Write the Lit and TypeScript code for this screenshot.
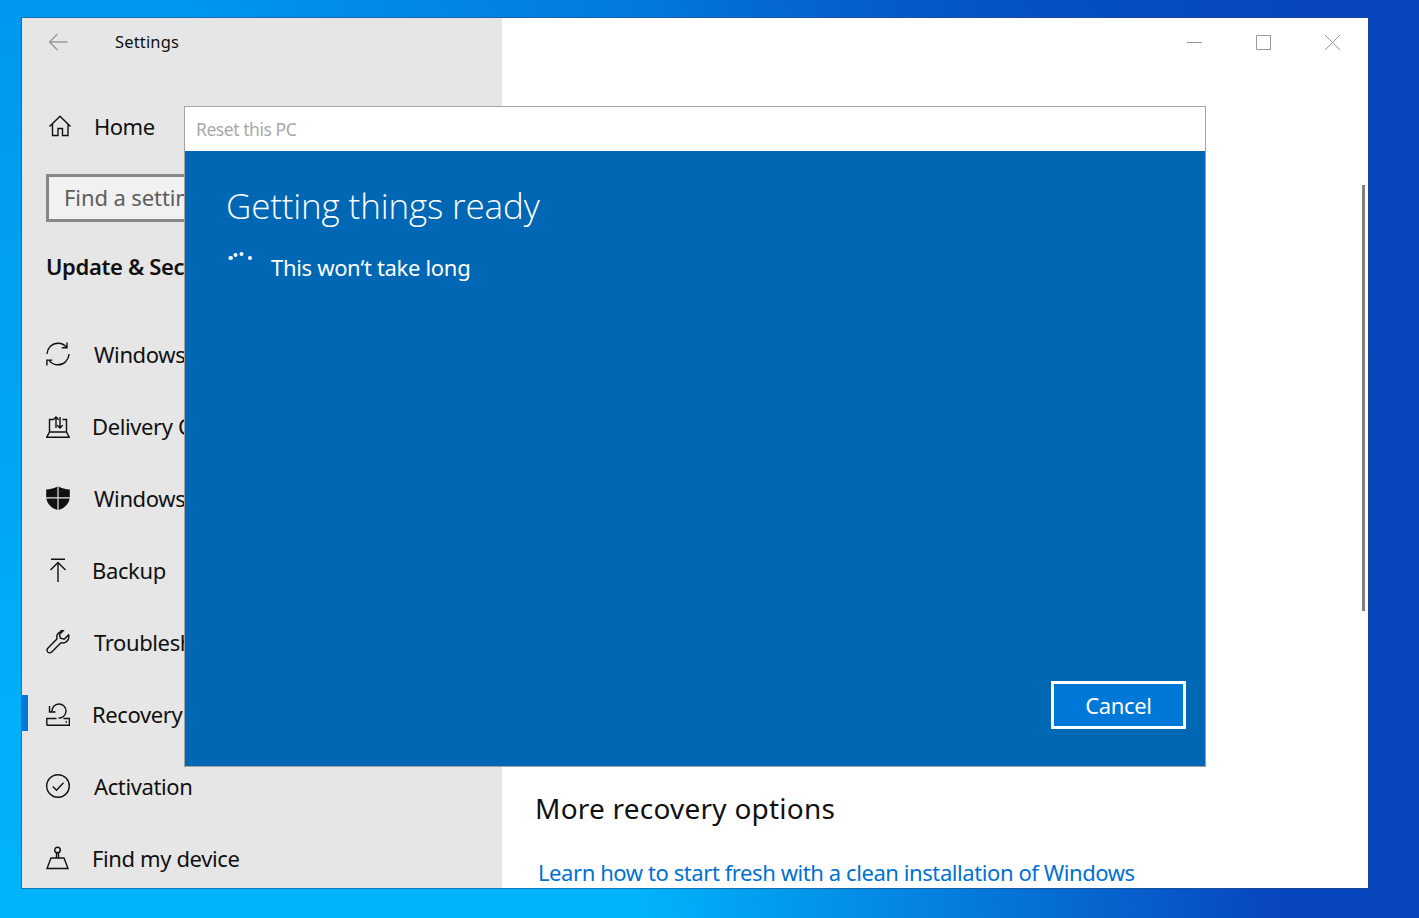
import { LitElement, html, css, svg } from "lit";
import { customElement } from "lit/decorators.js";

const ic = (body: unknown) => html`<svg class="ic" viewBox="0 0 24 24" fill="none" stroke="#111" stroke-width="1.4">${body}</svg>`;

const icons = {
  home: svg`<path d="M1.5 12.5 12 2.2l10.5 10.3M4.5 10v11.5h5.5v-7h4.5v7H20V10"/>`,
  sync: svg`<path d="M.9 12C1.400 6 6 1.200 12 1.200c3.600 0 6.600 1.500 8.700 4.200M23.100 12c-.5 6-5.100 10.800-11.100 10.800-3.600 0-6.600-1.500-8.700-4.200M21 .5v5.200h-5.200M.9 23.500v-5.400h5.400"/>`,
  delivery: svg`<path d="M3.500 18V5.500h4M16.500 5.500h4V18M.7 23.300 3.500 18h17l2.800 5.300zM10 14V3M7.300 5.700 10 3l2.700 2.700M14 3v11M11.300 11.300 14 14l2.700-2.700"/>`,
  shield: svg`<path fill="#111" stroke="none" d="M11.400 .5v10.800H.2V3.500c4.400-.2 8.200-1.200 11.200-3zM12.600 .5c3 1.800 6.800 2.800 11.200 3v7.800H12.600zM.4 12.500h11v11.500C5.400 22 1.100 18 .4 12.500zM12.600 12.500h11c-.7 5.500-5 9.500-11 11.500z"/>`,
  backup: svg`<path d="M5 1.200h14M12 24V4.500M4.500 12 12 4.500l7.500 7.500"/>`,
  wrench: svg`<path d="M15 1.600c-3 .6-5 3.800-3.900 7.200L1.800 18.200c-1.700 1.800-.3 4.700 1.800 4.700.8 0 1.500-.3 2.100-.9l9.300-9.300c4.200 1.200 8-2 7.900-6.100 0-.6-.1-1.100-.3-1.700l-4.400 4.400-3.800-1-1-3.800 3.900-3.900c-.7-.2-1.500-.1-2.200 0z"/>`,
  recovery: svg`<path d="M.8 23.300h22.600v-6.800H17.500M.8 23.300v-6.800h9.700M19.500 20h1.500M6 9.500A7 7 0 1 1 12.500 16M3.500 4v6h6"/>`,
  check: svg`<circle cx="12" cy="12" r="11.300"/><path d="m6.800 12.500 3.700 3.700 7-7.500"/>`,
  find: svg`<circle cx="11.500" cy="4" r="2.800"/><path d="M10.500 7v5M12.500 7v5M5 12h13l4 10.500H1z"/>`,
};

const navItems: [unknown, string, number, boolean][] = [
  [icons.sync, "Windows Update", 24, false],
  [icons.delivery, "Delivery Optimization", 22, false],
  [icons.shield, "Windows Security", 24, false],
  [icons.backup, "Backup", 22, false],
  [icons.wrench, "Troubleshoot", 24, false],
  [icons.recovery, "Recovery", 22, true],
  [icons.check, "Activation", 24, false],
  [icons.find, "Find my device", 22, false],
];

@customElement("app-root")
export class AppRoot extends LitElement {
  static styles = css`
    :host {
      display: block;
      width: 1419px;
      height: 918px;
      overflow: hidden;
      font-family: "Noto Sans", "Open Sans", sans-serif;
      color: #111;
    }
    .desktop {
      position: relative;
      width: 100%;
      height: 100%;
      padding: 18px 51px 30px 22px;
      box-sizing: border-box;
      background:
        radial-gradient(ellipse 900px 420px at 75% 0, rgba(5, 70, 190, 0.7), rgba(5, 70, 190, 0)),
        linear-gradient(90deg, rgba(0, 170, 255, 0) 45%, rgba(8, 70, 190, 1) 90%),
        linear-gradient(180deg, #0098f0 0%, #00b4fb 100%);
    }
    .window {
      display: grid;
      grid-template-columns: 480px 1fr;
      height: 870px;
      overflow: hidden;
      background: #fff;
      box-shadow: 0 0 0 1px rgba(40, 70, 120, 0.55);
    }
    .side {
      background: #e6e6e6;
      overflow: hidden;
    }
    .titlebar {
      display: flex;
      align-items: center;
      height: 50px;
      padding-left: 26px;
    }
    .back {
      width: 20px;
      height: 20px;
      stroke: #999;
      fill: none;
      stroke-width: 1.4;
      margin-top: -2px;
    }
    .app-name {
      margin-left: 47px;
      font-size: 16.5px;
      margin-top: -3px;
      letter-spacing: 0.15px;
    }
    .home {
      display: flex;
      align-items: center;
      height: 40px;
      margin-top: 38px;
      padding-left: 26px;
      font-size: 22px;
      letter-spacing: -0.5px;
    }
    .home .ic { margin-right: 22px; }
    .ic {
      width: 24px;
      height: 24px;
      flex: none;
    }
    .search {
      width: 100%;
      max-width: 300px;
      height: 48px;
      box-sizing: border-box;
      margin: 28px 0 0 24px;
      padding: 0 0 2px 15px;
      border: 3px solid #878787;
      background: #f1f1f1;
      color: #5d5d5d;
      display: flex;
      align-items: center;
      font-size: 22px;
      letter-spacing: -0.1px;
      white-space: nowrap;
    }
    .section {
      margin: 24px 0 0 24px;
      height: 40px;
      line-height: 40px;
      font-size: 22px;
      font-weight: 600;
      letter-spacing: -0.35px;
      white-space: nowrap;
    }
    nav { margin-top: 32px; }
    .item {
      position: relative;
      display: flex;
      align-items: center;
      height: 72px;
      padding-left: 24px;
      font-size: 22px;
      letter-spacing: -0.38px;
      white-space: nowrap;
    }
    .item.on::before {
      content: "";
      position: absolute;
      left: 0;
      top: 17px;
      width: 6px;
      height: 36px;
      background: #0078d7;
    }
    .main {
      position: relative;
      display: flex;
      flex-direction: column;
      padding-left: 33px;
    }
    .controls {
      position: absolute;
      top: 17px;
      right: 28px;
      display: flex;
      gap: 54px;
      align-items: center;
    }
    .controls svg {
      width: 15px;
      height: 15px;
      stroke: #999;
      fill: none;
      stroke-width: 1;
    }
    .scroll {
      position: absolute;
      right: 3px;
      top: 167px;
      width: 3px;
      height: 426px;
      background: #808080;
    }
    h2 {
      margin: 769px 0 0;
      font-size: 28px;
      font-weight: 400;
      line-height: 42px;
      color: #111;
      letter-spacing: 0.23px;
      white-space: nowrap;
    }
    .link {
      margin: 27px 0 0 3px;
      font-size: 22px;
      line-height: 32px;
      color: #0071d3;
      letter-spacing: -0.42px;
      white-space: nowrap;
    }
    .dialog {
      position: absolute;
      left: 184px;
      top: 106px;
      width: 1022px;
      height: 661px;
      box-sizing: border-box;
      border: 1px solid #a3a3a3;
      display: flex;
      flex-direction: column;
      background: #0067b4;
      color: #fff;
    }
    .dlg-title {
      height: 44px;
      flex: none;
      background: #fff;
      color: #a8a8a8;
      font-size: 17.5px;
      line-height: 44px;
      padding-left: 11px;
      letter-spacing: -0.45px;
    }
    .dlg-body {
      flex: 1;
      display: flex;
      flex-direction: column;
      padding: 31px 19px 37px 41px;
    }
    h1 {
      margin: 0;
      font-size: 35px;
      line-height: 48px;
      font-weight: 300;
      font-family: "Open Sans", "Noto Sans", sans-serif;
      letter-spacing: -0.15px;
    }
    .wait {
      display: flex;
      align-items: flex-start;
      margin-top: 19px;
      font-size: 22px;
      line-height: 36px;
      letter-spacing: -0.32px;
      font-weight: 400;
    }
    .spinner {
      width: 28px;
      height: 12px;
      margin: 2px 16px 0 1px;
      flex: none;
      fill: #fff;
    }
    .footer {
      margin-top: auto;
      display: flex;
      justify-content: flex-end;
    }
    button {
      width: 135px;
      height: 48px;
      box-sizing: border-box;
      border: 3px solid #fff;
      background: #0078d7;
      color: #fff;
      font: inherit;
      font-size: 22px;
      letter-spacing: -0.35px;
      padding: 0;
    }
  `;

  render() {
    return html`
      <div class="desktop">
        <div class="window">
          <aside class="side">
            <div class="titlebar">
              <svg class="back" viewBox="0 0 20 20"><path d="M19.500 10H1.500M9.500 2 1.500 10l8 8"/></svg>
              <span class="app-name">Settings</span>
            </div>
            <div class="home">${ic(icons.home)}<span>Home</span></div>
            <div class="search">Find a setting</div>
            <div class="section">Update &amp; Security</div>
            <nav>
              ${navItems.map(
                ([i, t, x, on]) => html`<div class="item ${on ? "on" : ""}">
                  ${ic(i)}<span style="margin-left:${x}px">${t}</span>
                </div>`
              )}
            </nav>
          </aside>
          <section class="main">
            <div class="controls">
              <svg viewBox="0 0 15 15"><path d="M0 7.500h15"/></svg>
              <svg viewBox="0 0 15 15"><path d="M.5.500h14v14H.500z"/></svg>
              <svg viewBox="0 0 15 15"><path d="m0 0 15 15M15 0 0 15"/></svg>
            </div>
            <div class="scroll"></div>
            <h2>More recovery options</h2>
            <div class="link">Learn how to start fresh with a clean installation of Windows</div>
          </section>
        </div>
        <div class="dialog">
          <div class="dlg-title">Reset this PC</div>
          <div class="dlg-body">
            <h1>Getting things ready</h1>
            <div class="wait">
              <svg class="spinner" viewBox="0 0 28 12">
                <ellipse cx="3.700" cy="7" rx="2.300" ry="2" />
                <circle cx="8.500" cy="4" r="2" />
                <circle cx="14.500" cy="3" r="2" />
                <circle cx="23" cy="7" r="2" />
              </svg>
              <span>This won‘t take long</span>
            </div>
            <div class="footer"><button>Cancel</button></div>
          </div>
        </div>
      </div>
    `;
  }
}
